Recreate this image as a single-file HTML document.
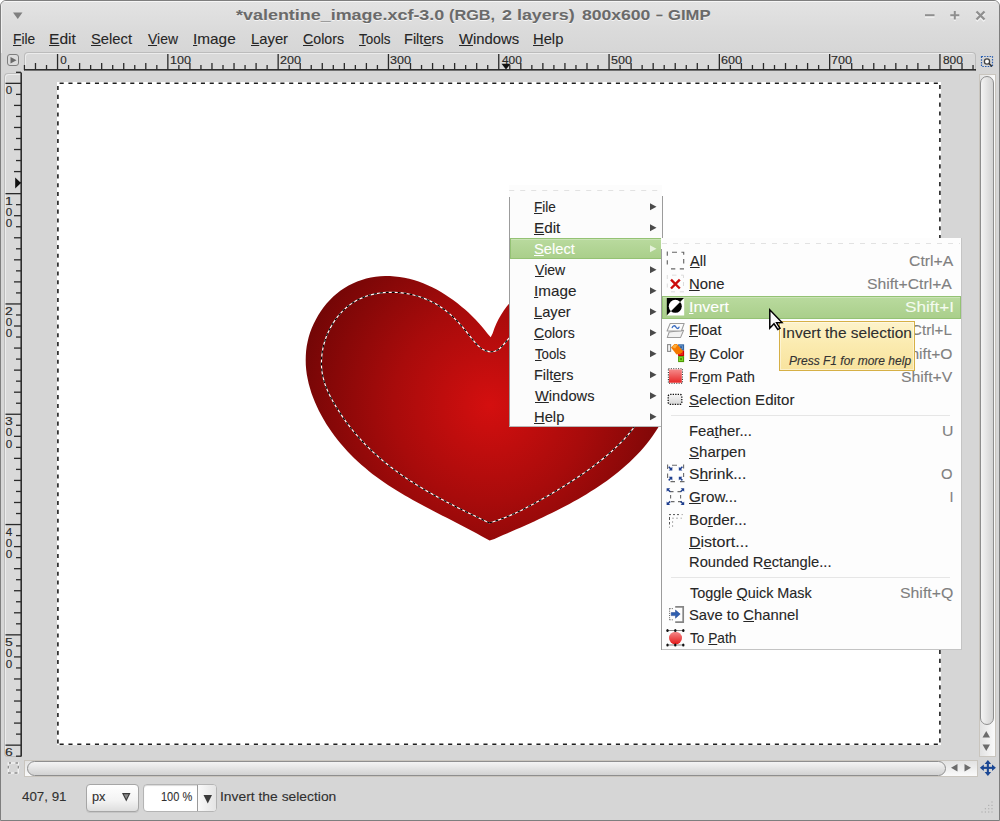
<!DOCTYPE html><html><head><meta charset="utf-8"><style>
*{margin:0;padding:0;box-sizing:border-box}
html,body{width:1000px;height:821px;overflow:hidden;background:#fff;font-family:"Liberation Sans",sans-serif}
.a{position:absolute}
.t{position:absolute;white-space:pre;line-height:1;transform-origin:0 0;-webkit-text-stroke:0.1px currentColor}
u{text-decoration:underline;text-decoration-thickness:1px;text-underline-offset:1.2px}
svg{position:absolute;left:0;top:0;overflow:visible}
</style></head><body>

<div class="a" style="left:0;top:0;width:1000px;height:821px;background:#d6d6d6;border:1px solid #7e7e7e;border-radius:6px 6px 0 0;overflow:hidden">
<div class="a" style="left:0;top:0;width:998px;height:52px;background:linear-gradient(#e3e3e3,#dadada 60%,#d6d6d6);border-top:1px solid #f6f6f6;border-left:1px solid #f0f0f0"></div>
</div>
<div class="t" style="left:236.00px;top:7.00px;font-size:15px;font-weight:bold;color:#6a6a6a;transform:scaleX(1.1954);-webkit-text-stroke:0.05px currentColor;text-shadow:0 1px 0 rgba(255,255,255,.7)">*valentine_image.xcf-3.0</div>
<div class="t" style="left:449.32px;top:7.00px;font-size:15px;font-weight:bold;color:#6a6a6a;transform:scaleX(1.0829);-webkit-text-stroke:0.05px currentColor;text-shadow:0 1px 0 rgba(255,255,255,.7)">(RGB,</div>
<div class="t" style="left:502.00px;top:7.00px;font-size:15px;font-weight:bold;color:#6a6a6a;transform:scaleX(1.1933);-webkit-text-stroke:0.05px currentColor;text-shadow:0 1px 0 rgba(255,255,255,.7)">2 layers)</div>
<div class="t" style="left:581.60px;top:7.00px;font-size:15px;font-weight:bold;color:#6a6a6a;transform:scaleX(1.1707);-webkit-text-stroke:0.05px currentColor;text-shadow:0 1px 0 rgba(255,255,255,.7)">800x600</div>
<div class="t" style="left:655.50px;top:7.00px;font-size:15px;font-weight:bold;color:#6a6a6a;transform:scaleX(0.8125);-webkit-text-stroke:0.05px currentColor;text-shadow:0 1px 0 rgba(255,255,255,.7)">–</div>
<div class="t" style="left:668.39px;top:7.00px;font-size:15px;font-weight:bold;color:#6a6a6a;transform:scaleX(1.1081);-webkit-text-stroke:0.05px currentColor;text-shadow:0 1px 0 rgba(255,255,255,.7)">GIMP</div>
<svg width="1000" height="821"><path d="M13,12.5 L22.5,12.5 L17.75,19 Z" fill="#7f7f7f"/><g transform="translate(0,1.6)" stroke="#f4f4f4" opacity="0.9"><path d="M925,15.2 H934.5" stroke-width="2"/><path d="M950.3,15.2 H959.3 M954.8,11 V19.5" stroke-width="2"/><path d="M976.5,11.5 L984.5,19.5 M984.5,11.5 L976.5,19.5" stroke-width="2.6"/></g><g stroke="#8f8f8f"><path d="M925,15.2 H934.5" stroke-width="2"/><path d="M950.3,15.2 H959.3 M954.8,11 V19.5" stroke-width="2"/><path d="M976.5,11.5 L984.5,19.5 M984.5,11.5 L976.5,19.5" stroke-width="2.3"/></g></svg>
<div class="t" style="left:12.65px;top:31.61px;font-size:14.4px;;color:#262626;transform:scaleX(0.9545);"><u>F</u>ile</div>
<div class="t" style="left:48.92px;top:31.61px;font-size:14.4px;;color:#262626;transform:scaleX(1.0833);"><u>E</u>dit</div>
<div class="t" style="left:90.97px;top:31.61px;font-size:14.4px;;color:#262626;transform:scaleX(1.0256);"><u>S</u>elect</div>
<div class="t" style="left:148.00px;top:31.61px;font-size:14.4px;;color:#262626;transform:scaleX(0.9677);"><u>V</u>iew</div>
<div class="t" style="left:193.33px;top:31.61px;font-size:14.4px;;color:#262626;transform:scaleX(1.0667);"><u>I</u>mage</div>
<div class="t" style="left:250.97px;top:31.61px;font-size:14.4px;;color:#262626;transform:scaleX(1.0286);"><u>L</u>ayer</div>
<div class="t" style="left:302.62px;top:31.61px;font-size:14.4px;;color:#262626;transform:scaleX(0.9850);"><u>C</u>olors</div>
<div class="t" style="left:358.70px;top:31.61px;font-size:14.4px;;color:#262626;transform:scaleX(0.9333);"><u>T</u>ools</div>
<div class="t" style="left:404.19px;top:31.61px;font-size:14.4px;;color:#262626;transform:scaleX(1.0105);">Filt<u>e</u>rs</div>
<div class="t" style="left:459.20px;top:31.61px;font-size:14.4px;;color:#262626;transform:scaleX(1.0310);"><u>W</u>indows</div>
<div class="t" style="left:532.88px;top:31.61px;font-size:14.4px;;color:#262626;transform:scaleX(1.0250);"><u>H</u>elp</div>
<div class="a" style="left:6.8px;top:54px;width:12px;height:12px;border:1.3px solid #7e7e7e;border-radius:3px;background:#dcdcdc"></div>
<svg width="1000" height="821"><path d="M10.5,57 L16.5,60.3 L10.5,63.6 Z" fill="#6a6a6a"/></svg>
<div class="a" style="left:24px;top:52px;width:952px;height:19px;border:1px solid #bcbcbc;border-bottom:none;border-radius:4px 4px 0 0;background:#d9d9d9;box-shadow:inset 1px 1px 0 #ececec"></div>
<svg width="1000" height="821"><rect x="24" y="69" width="952" height="1.6" fill="#2e2e2e"/><rect x="23.81" y="65" width="1.3" height="5" fill="#2a2a2a"/><rect x="34.84" y="63" width="1.3" height="7" fill="#2a2a2a"/><rect x="45.87" y="65" width="1.3" height="5" fill="#2a2a2a"/><rect x="56.90" y="54" width="1.3" height="16" fill="#2a2a2a"/><rect x="67.93" y="65" width="1.3" height="5" fill="#2a2a2a"/><rect x="78.96" y="63" width="1.3" height="7" fill="#2a2a2a"/><rect x="89.99" y="65" width="1.3" height="5" fill="#2a2a2a"/><rect x="101.02" y="63" width="1.3" height="7" fill="#2a2a2a"/><rect x="112.05" y="65" width="1.3" height="5" fill="#2a2a2a"/><rect x="123.08" y="63" width="1.3" height="7" fill="#2a2a2a"/><rect x="134.11" y="65" width="1.3" height="5" fill="#2a2a2a"/><rect x="145.14" y="63" width="1.3" height="7" fill="#2a2a2a"/><rect x="156.17" y="65" width="1.3" height="5" fill="#2a2a2a"/><rect x="167.20" y="54" width="1.3" height="16" fill="#2a2a2a"/><rect x="178.23" y="65" width="1.3" height="5" fill="#2a2a2a"/><rect x="189.26" y="63" width="1.3" height="7" fill="#2a2a2a"/><rect x="200.29" y="65" width="1.3" height="5" fill="#2a2a2a"/><rect x="211.32" y="63" width="1.3" height="7" fill="#2a2a2a"/><rect x="222.35" y="65" width="1.3" height="5" fill="#2a2a2a"/><rect x="233.38" y="63" width="1.3" height="7" fill="#2a2a2a"/><rect x="244.41" y="65" width="1.3" height="5" fill="#2a2a2a"/><rect x="255.44" y="63" width="1.3" height="7" fill="#2a2a2a"/><rect x="266.47" y="65" width="1.3" height="5" fill="#2a2a2a"/><rect x="277.50" y="54" width="1.3" height="16" fill="#2a2a2a"/><rect x="288.53" y="65" width="1.3" height="5" fill="#2a2a2a"/><rect x="299.56" y="63" width="1.3" height="7" fill="#2a2a2a"/><rect x="310.59" y="65" width="1.3" height="5" fill="#2a2a2a"/><rect x="321.62" y="63" width="1.3" height="7" fill="#2a2a2a"/><rect x="332.65" y="65" width="1.3" height="5" fill="#2a2a2a"/><rect x="343.68" y="63" width="1.3" height="7" fill="#2a2a2a"/><rect x="354.71" y="65" width="1.3" height="5" fill="#2a2a2a"/><rect x="365.74" y="63" width="1.3" height="7" fill="#2a2a2a"/><rect x="376.77" y="65" width="1.3" height="5" fill="#2a2a2a"/><rect x="387.80" y="54" width="1.3" height="16" fill="#2a2a2a"/><rect x="398.83" y="65" width="1.3" height="5" fill="#2a2a2a"/><rect x="409.86" y="63" width="1.3" height="7" fill="#2a2a2a"/><rect x="420.89" y="65" width="1.3" height="5" fill="#2a2a2a"/><rect x="431.92" y="63" width="1.3" height="7" fill="#2a2a2a"/><rect x="442.95" y="65" width="1.3" height="5" fill="#2a2a2a"/><rect x="453.98" y="63" width="1.3" height="7" fill="#2a2a2a"/><rect x="465.01" y="65" width="1.3" height="5" fill="#2a2a2a"/><rect x="476.04" y="63" width="1.3" height="7" fill="#2a2a2a"/><rect x="487.07" y="65" width="1.3" height="5" fill="#2a2a2a"/><rect x="498.10" y="54" width="1.3" height="16" fill="#2a2a2a"/><rect x="509.13" y="65" width="1.3" height="5" fill="#2a2a2a"/><rect x="520.16" y="63" width="1.3" height="7" fill="#2a2a2a"/><rect x="531.19" y="65" width="1.3" height="5" fill="#2a2a2a"/><rect x="542.22" y="63" width="1.3" height="7" fill="#2a2a2a"/><rect x="553.25" y="65" width="1.3" height="5" fill="#2a2a2a"/><rect x="564.28" y="63" width="1.3" height="7" fill="#2a2a2a"/><rect x="575.31" y="65" width="1.3" height="5" fill="#2a2a2a"/><rect x="586.34" y="63" width="1.3" height="7" fill="#2a2a2a"/><rect x="597.37" y="65" width="1.3" height="5" fill="#2a2a2a"/><rect x="608.40" y="54" width="1.3" height="16" fill="#2a2a2a"/><rect x="619.43" y="65" width="1.3" height="5" fill="#2a2a2a"/><rect x="630.46" y="63" width="1.3" height="7" fill="#2a2a2a"/><rect x="641.49" y="65" width="1.3" height="5" fill="#2a2a2a"/><rect x="652.52" y="63" width="1.3" height="7" fill="#2a2a2a"/><rect x="663.55" y="65" width="1.3" height="5" fill="#2a2a2a"/><rect x="674.58" y="63" width="1.3" height="7" fill="#2a2a2a"/><rect x="685.61" y="65" width="1.3" height="5" fill="#2a2a2a"/><rect x="696.64" y="63" width="1.3" height="7" fill="#2a2a2a"/><rect x="707.67" y="65" width="1.3" height="5" fill="#2a2a2a"/><rect x="718.70" y="54" width="1.3" height="16" fill="#2a2a2a"/><rect x="729.73" y="65" width="1.3" height="5" fill="#2a2a2a"/><rect x="740.76" y="63" width="1.3" height="7" fill="#2a2a2a"/><rect x="751.79" y="65" width="1.3" height="5" fill="#2a2a2a"/><rect x="762.82" y="63" width="1.3" height="7" fill="#2a2a2a"/><rect x="773.85" y="65" width="1.3" height="5" fill="#2a2a2a"/><rect x="784.88" y="63" width="1.3" height="7" fill="#2a2a2a"/><rect x="795.91" y="65" width="1.3" height="5" fill="#2a2a2a"/><rect x="806.94" y="63" width="1.3" height="7" fill="#2a2a2a"/><rect x="817.97" y="65" width="1.3" height="5" fill="#2a2a2a"/><rect x="829.00" y="54" width="1.3" height="16" fill="#2a2a2a"/><rect x="840.03" y="65" width="1.3" height="5" fill="#2a2a2a"/><rect x="851.06" y="63" width="1.3" height="7" fill="#2a2a2a"/><rect x="862.09" y="65" width="1.3" height="5" fill="#2a2a2a"/><rect x="873.12" y="63" width="1.3" height="7" fill="#2a2a2a"/><rect x="884.15" y="65" width="1.3" height="5" fill="#2a2a2a"/><rect x="895.18" y="63" width="1.3" height="7" fill="#2a2a2a"/><rect x="906.21" y="65" width="1.3" height="5" fill="#2a2a2a"/><rect x="917.24" y="63" width="1.3" height="7" fill="#2a2a2a"/><rect x="928.27" y="65" width="1.3" height="5" fill="#2a2a2a"/><rect x="939.30" y="54" width="1.3" height="16" fill="#2a2a2a"/><rect x="950.33" y="65" width="1.3" height="5" fill="#2a2a2a"/><rect x="961.36" y="63" width="1.3" height="7" fill="#2a2a2a"/><rect x="972.39" y="65" width="1.3" height="5" fill="#2a2a2a"/></svg>
<div class="t" style="left:60.30px;top:54.08px;font-size:11.6px;;color:#2a2a2a;transform:scaleX(1.0000);-webkit-text-stroke:0.15px currentColor">0</div>
<div class="t" style="left:169.52px;top:54.08px;font-size:11.6px;;color:#2a2a2a;transform:scaleX(1.0833);-webkit-text-stroke:0.15px currentColor">100</div>
<div class="t" style="left:279.82px;top:54.08px;font-size:11.6px;;color:#2a2a2a;transform:scaleX(1.0833);-webkit-text-stroke:0.15px currentColor">200</div>
<div class="t" style="left:390.12px;top:54.08px;font-size:11.6px;;color:#2a2a2a;transform:scaleX(1.0833);-webkit-text-stroke:0.15px currentColor">300</div>
<div class="t" style="left:501.50px;top:54.08px;font-size:11.6px;;color:#2a2a2a;transform:scaleX(1.0263);-webkit-text-stroke:0.15px currentColor">400</div>
<div class="t" style="left:610.72px;top:54.08px;font-size:11.6px;;color:#2a2a2a;transform:scaleX(1.0833);-webkit-text-stroke:0.15px currentColor">500</div>
<div class="t" style="left:721.02px;top:54.08px;font-size:11.6px;;color:#2a2a2a;transform:scaleX(1.0833);-webkit-text-stroke:0.15px currentColor">600</div>
<div class="t" style="left:831.32px;top:54.08px;font-size:11.6px;;color:#2a2a2a;transform:scaleX(1.0833);-webkit-text-stroke:0.15px currentColor">700</div>
<div class="t" style="left:942.70px;top:54.08px;font-size:11.6px;;color:#2a2a2a;transform:scaleX(1.0263);-webkit-text-stroke:0.15px currentColor">800</div>
<svg width="1000" height="821"><path d="M501.5,63.8 L510.5,63.8 L506,69.5 Z" fill="#111"/></svg>
<svg width="1000" height="821"><rect x="981.5" y="56.5" width="11" height="10" fill="none" stroke="#2a5fb0" stroke-width="1.2" stroke-dasharray="1.5,1.2"/><circle cx="987" cy="61.5" r="2.6" fill="#fff" stroke="#444" stroke-width="1.3"/><path d="M989,63.5 L992,66.5" stroke="#333" stroke-width="1.6"/></svg>
<div class="a" style="left:3.5px;top:72.5px;width:18px;height:684.5px;border:1px solid #bcbcbc;border-right:none;border-radius:4px 0 0 4px;background:#d9d9d9;box-shadow:inset 1px 1px 0 #ececec"></div>
<svg width="1000" height="821"><rect x="20.4" y="72.5" width="1.6" height="684" fill="#2e2e2e"/><rect x="16" y="71.67" width="5" height="1.3" fill="#2a2a2a"/><rect x="5.5" y="82.70" width="15.5" height="1.3" fill="#2a2a2a"/><rect x="16" y="93.73" width="5" height="1.3" fill="#2a2a2a"/><rect x="14" y="104.76" width="7" height="1.3" fill="#2a2a2a"/><rect x="16" y="115.79" width="5" height="1.3" fill="#2a2a2a"/><rect x="14" y="126.82" width="7" height="1.3" fill="#2a2a2a"/><rect x="16" y="137.85" width="5" height="1.3" fill="#2a2a2a"/><rect x="14" y="148.88" width="7" height="1.3" fill="#2a2a2a"/><rect x="16" y="159.91" width="5" height="1.3" fill="#2a2a2a"/><rect x="14" y="170.94" width="7" height="1.3" fill="#2a2a2a"/><rect x="16" y="181.97" width="5" height="1.3" fill="#2a2a2a"/><rect x="5.5" y="193.00" width="15.5" height="1.3" fill="#2a2a2a"/><rect x="16" y="204.03" width="5" height="1.3" fill="#2a2a2a"/><rect x="14" y="215.06" width="7" height="1.3" fill="#2a2a2a"/><rect x="16" y="226.09" width="5" height="1.3" fill="#2a2a2a"/><rect x="14" y="237.12" width="7" height="1.3" fill="#2a2a2a"/><rect x="16" y="248.15" width="5" height="1.3" fill="#2a2a2a"/><rect x="14" y="259.18" width="7" height="1.3" fill="#2a2a2a"/><rect x="16" y="270.21" width="5" height="1.3" fill="#2a2a2a"/><rect x="14" y="281.24" width="7" height="1.3" fill="#2a2a2a"/><rect x="16" y="292.27" width="5" height="1.3" fill="#2a2a2a"/><rect x="5.5" y="303.30" width="15.5" height="1.3" fill="#2a2a2a"/><rect x="16" y="314.33" width="5" height="1.3" fill="#2a2a2a"/><rect x="14" y="325.36" width="7" height="1.3" fill="#2a2a2a"/><rect x="16" y="336.39" width="5" height="1.3" fill="#2a2a2a"/><rect x="14" y="347.42" width="7" height="1.3" fill="#2a2a2a"/><rect x="16" y="358.45" width="5" height="1.3" fill="#2a2a2a"/><rect x="14" y="369.48" width="7" height="1.3" fill="#2a2a2a"/><rect x="16" y="380.51" width="5" height="1.3" fill="#2a2a2a"/><rect x="14" y="391.54" width="7" height="1.3" fill="#2a2a2a"/><rect x="16" y="402.57" width="5" height="1.3" fill="#2a2a2a"/><rect x="5.5" y="413.60" width="15.5" height="1.3" fill="#2a2a2a"/><rect x="16" y="424.63" width="5" height="1.3" fill="#2a2a2a"/><rect x="14" y="435.66" width="7" height="1.3" fill="#2a2a2a"/><rect x="16" y="446.69" width="5" height="1.3" fill="#2a2a2a"/><rect x="14" y="457.72" width="7" height="1.3" fill="#2a2a2a"/><rect x="16" y="468.75" width="5" height="1.3" fill="#2a2a2a"/><rect x="14" y="479.78" width="7" height="1.3" fill="#2a2a2a"/><rect x="16" y="490.81" width="5" height="1.3" fill="#2a2a2a"/><rect x="14" y="501.84" width="7" height="1.3" fill="#2a2a2a"/><rect x="16" y="512.87" width="5" height="1.3" fill="#2a2a2a"/><rect x="5.5" y="523.90" width="15.5" height="1.3" fill="#2a2a2a"/><rect x="16" y="534.93" width="5" height="1.3" fill="#2a2a2a"/><rect x="14" y="545.96" width="7" height="1.3" fill="#2a2a2a"/><rect x="16" y="556.99" width="5" height="1.3" fill="#2a2a2a"/><rect x="14" y="568.02" width="7" height="1.3" fill="#2a2a2a"/><rect x="16" y="579.05" width="5" height="1.3" fill="#2a2a2a"/><rect x="14" y="590.08" width="7" height="1.3" fill="#2a2a2a"/><rect x="16" y="601.11" width="5" height="1.3" fill="#2a2a2a"/><rect x="14" y="612.14" width="7" height="1.3" fill="#2a2a2a"/><rect x="16" y="623.17" width="5" height="1.3" fill="#2a2a2a"/><rect x="5.5" y="634.20" width="15.5" height="1.3" fill="#2a2a2a"/><rect x="16" y="645.23" width="5" height="1.3" fill="#2a2a2a"/><rect x="14" y="656.26" width="7" height="1.3" fill="#2a2a2a"/><rect x="16" y="667.29" width="5" height="1.3" fill="#2a2a2a"/><rect x="14" y="678.32" width="7" height="1.3" fill="#2a2a2a"/><rect x="16" y="689.35" width="5" height="1.3" fill="#2a2a2a"/><rect x="14" y="700.38" width="7" height="1.3" fill="#2a2a2a"/><rect x="16" y="711.41" width="5" height="1.3" fill="#2a2a2a"/><rect x="14" y="722.44" width="7" height="1.3" fill="#2a2a2a"/><rect x="16" y="733.47" width="5" height="1.3" fill="#2a2a2a"/><rect x="5.5" y="744.50" width="15.5" height="1.3" fill="#2a2a2a"/><rect x="16" y="755.53" width="5" height="1.3" fill="#2a2a2a"/></svg>
<div class="t" style="left:5.80px;top:84.38px;font-size:11.6px;;color:#2a2a2a;transform:scaleX(1.0000);-webkit-text-stroke:0.15px currentColor">0</div>
<div class="t" style="left:4.60px;top:194.68px;font-size:11.6px;;color:#2a2a2a;transform:scaleX(1.2000);-webkit-text-stroke:0.15px currentColor">1</div>
<div class="t" style="left:5.80px;top:205.88px;font-size:11.6px;;color:#2a2a2a;transform:scaleX(1.0000);-webkit-text-stroke:0.15px currentColor">0</div>
<div class="t" style="left:5.80px;top:217.08px;font-size:11.6px;;color:#2a2a2a;transform:scaleX(1.0000);-webkit-text-stroke:0.15px currentColor">0</div>
<div class="t" style="left:4.60px;top:304.98px;font-size:11.6px;;color:#2a2a2a;transform:scaleX(1.2000);-webkit-text-stroke:0.15px currentColor">2</div>
<div class="t" style="left:5.80px;top:316.18px;font-size:11.6px;;color:#2a2a2a;transform:scaleX(1.0000);-webkit-text-stroke:0.15px currentColor">0</div>
<div class="t" style="left:5.80px;top:327.38px;font-size:11.6px;;color:#2a2a2a;transform:scaleX(1.0000);-webkit-text-stroke:0.15px currentColor">0</div>
<div class="t" style="left:4.60px;top:415.28px;font-size:11.6px;;color:#2a2a2a;transform:scaleX(1.2000);-webkit-text-stroke:0.15px currentColor">3</div>
<div class="t" style="left:5.80px;top:426.48px;font-size:11.6px;;color:#2a2a2a;transform:scaleX(1.0000);-webkit-text-stroke:0.15px currentColor">0</div>
<div class="t" style="left:5.80px;top:437.68px;font-size:11.6px;;color:#2a2a2a;transform:scaleX(1.0000);-webkit-text-stroke:0.15px currentColor">0</div>
<div class="t" style="left:5.80px;top:525.58px;font-size:11.6px;;color:#2a2a2a;transform:scaleX(1.0000);-webkit-text-stroke:0.15px currentColor">4</div>
<div class="t" style="left:5.80px;top:536.78px;font-size:11.6px;;color:#2a2a2a;transform:scaleX(1.0000);-webkit-text-stroke:0.15px currentColor">0</div>
<div class="t" style="left:5.80px;top:547.98px;font-size:11.6px;;color:#2a2a2a;transform:scaleX(1.0000);-webkit-text-stroke:0.15px currentColor">0</div>
<div class="t" style="left:4.60px;top:635.88px;font-size:11.6px;;color:#2a2a2a;transform:scaleX(1.2000);-webkit-text-stroke:0.15px currentColor">5</div>
<div class="t" style="left:5.80px;top:647.08px;font-size:11.6px;;color:#2a2a2a;transform:scaleX(1.0000);-webkit-text-stroke:0.15px currentColor">0</div>
<div class="t" style="left:5.80px;top:658.28px;font-size:11.6px;;color:#2a2a2a;transform:scaleX(1.0000);-webkit-text-stroke:0.15px currentColor">0</div>
<div class="t" style="left:4.60px;top:746.18px;font-size:11.6px;;color:#2a2a2a;transform:scaleX(1.2000);-webkit-text-stroke:0.15px currentColor">6</div>
<svg width="1000" height="821"><path d="M15.2,177.6 L15.2,188.4 L21,183 Z" fill="#111"/></svg>
<div class="a" style="left:57px;top:82px;width:884px;height:663px;background:#fff"></div>
<svg width="1000" height="821"><rect x="57.9" y="83.3" width="882" height="661" fill="none" stroke="#fff" stroke-width="1.6"/><path d="M57.1,83.3 L940.7,83.3" stroke="#1e1e1e" stroke-width="1.6" stroke-dasharray="4.1,4.73" stroke-dashoffset="6.33"/><path d="M57.9,84 L57.9,744" stroke="#1e1e1e" stroke-width="1.6" stroke-dasharray="4.1,4.73" stroke-dashoffset="6.83"/><path d="M939.9,84 L939.9,744" stroke="#1e1e1e" stroke-width="1.6" stroke-dasharray="4.1,4.73" stroke-dashoffset="7.93"/><path d="M57.1,744.3 L940.7,744.3" stroke="#1e1e1e" stroke-width="1.6" stroke-dasharray="4.1,4.73" stroke-dashoffset="6.33"/></svg>
<svg width="1000" height="821"><defs><radialGradient id="hg" gradientUnits="userSpaceOnUse" cx="490" cy="405" r="215"><stop offset="0" stop-color="#d40f0f"/><stop offset="0.45" stop-color="#a80b0b"/><stop offset="1" stop-color="#680505"/></radialGradient></defs><path d="M489.6,540.6 L485.4,538.3 L481.2,535.9 L476.9,533.5 L472.6,531.2 L468.3,528.9 L464.0,526.7 L459.7,524.5 L455.4,522.2 L451.1,520.0 L446.8,517.8 L442.5,515.7 L438.2,513.5 L433.9,511.3 L429.7,509.0 L425.4,506.8 L421.2,504.6 L417.0,502.3 L412.8,500.0 L408.6,497.6 L404.5,495.2 L400.4,492.8 L396.3,490.3 L392.3,487.8 L388.3,485.2 L384.3,482.5 L380.4,479.8 L376.6,477.0 L372.7,474.2 L369.0,471.2 L365.3,468.1 L361.6,465.0 L358.0,461.8 L354.5,458.4 L351.0,455.0 L347.6,451.5 L344.3,447.8 L341.0,444.0 L337.9,440.2 L334.8,436.2 L331.9,432.2 L329.0,428.1 L326.3,423.9 L323.7,419.6 L321.3,415.3 L319.0,410.9 L316.9,406.5 L314.9,402.0 L313.1,397.5 L311.4,392.9 L310.0,388.3 L308.7,383.7 L307.7,379.0 L306.8,374.4 L306.2,369.7 L305.8,365.0 L305.7,360.3 L305.8,355.7 L306.1,351.0 L306.7,346.3 L307.6,341.7 L308.7,337.1 L310.1,332.6 L311.8,328.1 L313.7,323.7 L315.9,319.4 L318.2,315.2 L320.8,311.2 L323.6,307.2 L326.6,303.5 L329.9,299.9 L333.3,296.6 L336.9,293.4 L340.6,290.5 L344.5,287.9 L348.6,285.5 L352.8,283.4 L357.2,281.5 L361.7,279.9 L366.2,278.6 L370.9,277.6 L375.6,276.8 L380.4,276.3 L385.2,276.1 L390.0,276.1 L394.8,276.4 L399.6,276.9 L404.4,277.7 L409.2,278.8 L413.9,280.1 L418.6,281.6 L423.2,283.3 L427.7,285.2 L432.2,287.3 L436.7,289.6 L441.0,292.1 L445.3,294.7 L449.4,297.4 L453.5,300.3 L457.5,303.3 L461.3,306.4 L465.1,309.6 L468.7,312.8 L472.2,316.2 L475.5,319.6 L478.7,323.1 L481.8,326.5 L484.7,330.0 L487.4,333.6 L490.7,337.3 L492.7,333.3 L494.4,328.3 L496.4,323.6 L498.6,319.0 L501.1,314.7 L503.8,310.5 L506.7,306.6 L509.9,302.8 L513.3,299.3 L516.8,296.0 L520.6,292.9 L524.4,290.0 L528.5,287.4 L532.7,285.0 L537.0,282.8 L541.4,280.9 L546.0,279.3 L550.6,277.9 L555.4,276.7 L560.1,275.8 L565.0,275.1 L569.9,274.7 L574.8,274.5 L579.7,274.6 L584.6,274.9 L589.6,275.4 L594.4,276.2 L599.3,277.1 L604.1,278.4 L608.8,279.8 L613.5,281.5 L618.1,283.3 L622.5,285.4 L626.9,287.7 L631.1,290.3 L635.2,293.0 L639.1,296.0 L642.9,299.1 L646.4,302.5 L649.8,306.0 L653.0,309.7 L656.0,313.6 L658.9,317.6 L661.5,321.7 L663.8,326.0 L666.0,330.3 L667.9,334.8 L669.7,339.4 L671.1,344.0 L672.4,348.7 L673.3,353.4 L674.1,358.2 L674.5,363.0 L674.8,367.8 L674.7,372.6 L674.5,377.4 L674.0,382.2 L673.3,387.0 L672.4,391.7 L671.2,396.5 L669.9,401.2 L668.4,405.8 L666.6,410.4 L664.7,414.9 L662.6,419.3 L660.4,423.7 L657.9,427.9 L655.3,432.1 L652.6,436.1 L649.7,440.1 L646.6,444.0 L643.5,447.8 L640.2,451.4 L636.8,455.0 L633.3,458.5 L629.8,462.0 L626.1,465.3 L622.4,468.5 L618.6,471.7 L614.8,474.8 L610.9,477.8 L607.0,480.7 L602.9,483.5 L598.9,486.3 L594.8,489.0 L590.6,491.6 L586.5,494.2 L582.2,496.7 L578.0,499.2 L573.7,501.6 L569.4,504.0 L565.0,506.3 L560.6,508.6 L556.3,510.8 L551.8,513.0 L547.4,515.1 L543.0,517.2 L538.6,519.3 L534.1,521.4 L529.7,523.4 L525.2,525.4 L520.8,527.4 L516.4,529.3 L511.9,531.3 L507.5,533.2 L503.1,535.1 L498.7,537.1 L494.4,539.0 L489.6,540.6 Z" fill="url(#hg)"/><path d="M489.6,522.9 L486.3,521.4 L483.1,519.9 L479.9,518.4 L476.6,516.8 L473.4,515.3 L470.2,513.7 L466.9,512.2 L463.7,510.6 L460.5,509.0 L457.2,507.4 L454.0,505.8 L450.8,504.1 L447.6,502.4 L444.4,500.8 L441.2,499.1 L438.0,497.3 L434.8,495.6 L431.7,493.8 L428.5,492.0 L425.4,490.2 L422.3,488.3 L419.2,486.5 L416.1,484.6 L413.1,482.6 L410.0,480.7 L407.0,478.7 L404.0,476.7 L401.1,474.6 L398.2,472.5 L395.2,470.4 L392.4,468.2 L389.5,466.1 L386.7,463.8 L383.9,461.6 L381.2,459.3 L378.5,456.9 L375.8,454.5 L373.1,452.1 L370.5,449.7 L368.0,447.2 L365.4,444.6 L363.0,442.0 L360.5,439.4 L358.1,436.7 L355.8,434.0 L353.5,431.3 L351.2,428.5 L349.0,425.6 L346.8,422.8 L344.7,419.8 L342.6,416.9 L340.6,413.9 L338.6,410.8 L336.7,407.8 L334.8,404.6 L333.0,401.5 L331.2,398.3 L329.6,395.0 L328.0,391.8 L326.6,388.4 L325.3,385.1 L324.2,381.7 L323.3,378.2 L322.5,374.7 L321.9,371.2 L321.6,367.6 L321.4,364.0 L321.5,360.4 L321.7,356.8 L322.1,353.2 L322.7,349.6 L323.4,346.0 L324.4,342.5 L325.5,339.0 L326.7,335.5 L328.2,332.2 L329.8,328.9 L331.5,325.7 L333.4,322.6 L335.4,319.6 L337.6,316.7 L339.9,314.0 L342.3,311.3 L344.9,308.9 L347.6,306.5 L350.4,304.4 L353.3,302.4 L356.3,300.6 L359.5,299.0 L362.7,297.6 L366.0,296.3 L369.4,295.3 L372.8,294.4 L376.4,293.6 L379.9,293.0 L383.5,292.6 L387.1,292.4 L390.8,292.3 L394.4,292.3 L398.1,292.5 L401.8,292.9 L405.4,293.4 L409.0,294.0 L412.6,294.8 L416.2,295.8 L419.7,296.8 L423.1,298.0 L426.5,299.4 L429.8,300.8 L433.0,302.4 L436.1,304.1 L439.1,305.9 L442.1,307.9 L444.9,310.0 L447.6,312.1 L450.3,314.4 L452.9,316.8 L455.5,319.3 L458.0,321.9 L460.4,324.6 L462.9,327.4 L465.3,330.3 L467.7,333.3 L470.1,336.3 L472.5,339.4 L475.0,342.4 L477.5,345.2 L480.2,347.6 L483.1,349.6 L486.0,350.9 L489.0,351.6 L492.0,351.7 L494.9,351.2 L497.7,349.9 L500.2,348.0 L502.6,345.6 L504.9,343.0 L507.3,340.2 L509.7,337.4 L512.2,334.7 L514.7,331.9 L517.3,329.2 L519.9,326.5 L522.6,323.9 L525.3,321.3 L528.1,318.7 L530.9,316.3 L533.8,313.9 L536.7,311.7 L539.7,309.5 L542.7,307.4 L545.8,305.5 L548.9,303.7 L552.0,302.1 L555.2,300.6 L558.5,299.2 L561.8,298.1 L565.1,297.1 L568.4,296.3 L571.8,295.7 L575.3,295.4 L578.7,295.2 L582.2,295.3 L585.8,295.6 L589.3,296.1 L592.8,296.7 L596.3,297.6 L599.7,298.7 L603.2,299.9 L606.5,301.3 L609.8,302.9 L613.1,304.7 L616.2,306.6 L619.3,308.7 L622.2,310.9 L625.0,313.3 L627.7,315.8 L630.3,318.4 L632.7,321.2 L634.9,324.1 L637.0,327.1 L639.0,330.2 L640.8,333.4 L642.4,336.7 L643.9,340.0 L645.3,343.5 L646.5,347.0 L647.6,350.5 L648.5,354.1 L649.3,357.8 L649.9,361.4 L650.4,365.1 L650.7,368.8 L650.9,372.5 L650.9,376.2 L650.8,379.9 L650.6,383.6 L650.2,387.2 L649.7,390.8 L649.0,394.4 L648.2,397.9 L647.2,401.3 L646.1,404.7 L644.8,408.0 L643.4,411.2 L641.9,414.4 L640.3,417.4 L638.5,420.4 L636.7,423.4 L634.7,426.3 L632.6,429.1 L630.4,431.9 L628.2,434.6 L625.9,437.2 L623.5,439.8 L621.0,442.4 L618.5,444.9 L615.9,447.4 L613.2,449.9 L610.6,452.3 L607.9,454.6 L605.1,457.0 L602.3,459.3 L599.5,461.5 L596.6,463.8 L593.7,466.0 L590.8,468.1 L587.8,470.3 L584.9,472.4 L581.8,474.5 L578.8,476.5 L575.8,478.5 L572.7,480.5 L569.7,482.5 L566.6,484.5 L563.5,486.4 L560.4,488.3 L557.3,490.2 L554.2,492.0 L551.1,493.9 L548.0,495.7 L544.9,497.5 L541.8,499.2 L538.7,501.0 L535.6,502.7 L532.5,504.5 L529.4,506.1 L526.2,507.8 L523.1,509.4 L519.9,511.0 L516.7,512.5 L513.5,514.0 L510.2,515.4 L506.9,516.8 L503.6,518.1 L500.2,519.4 L496.7,520.6 L493.2,521.8 L489.6,522.9 Z" fill="none" stroke="#fff" stroke-width="1.15"/><path d="M489.6,522.9 L486.3,521.4 L483.1,519.9 L479.9,518.4 L476.6,516.8 L473.4,515.3 L470.2,513.7 L466.9,512.2 L463.7,510.6 L460.5,509.0 L457.2,507.4 L454.0,505.8 L450.8,504.1 L447.6,502.4 L444.4,500.8 L441.2,499.1 L438.0,497.3 L434.8,495.6 L431.7,493.8 L428.5,492.0 L425.4,490.2 L422.3,488.3 L419.2,486.5 L416.1,484.6 L413.1,482.6 L410.0,480.7 L407.0,478.7 L404.0,476.7 L401.1,474.6 L398.2,472.5 L395.2,470.4 L392.4,468.2 L389.5,466.1 L386.7,463.8 L383.9,461.6 L381.2,459.3 L378.5,456.9 L375.8,454.5 L373.1,452.1 L370.5,449.7 L368.0,447.2 L365.4,444.6 L363.0,442.0 L360.5,439.4 L358.1,436.7 L355.8,434.0 L353.5,431.3 L351.2,428.5 L349.0,425.6 L346.8,422.8 L344.7,419.8 L342.6,416.9 L340.6,413.9 L338.6,410.8 L336.7,407.8 L334.8,404.6 L333.0,401.5 L331.2,398.3 L329.6,395.0 L328.0,391.8 L326.6,388.4 L325.3,385.1 L324.2,381.7 L323.3,378.2 L322.5,374.7 L321.9,371.2 L321.6,367.6 L321.4,364.0 L321.5,360.4 L321.7,356.8 L322.1,353.2 L322.7,349.6 L323.4,346.0 L324.4,342.5 L325.5,339.0 L326.7,335.5 L328.2,332.2 L329.8,328.9 L331.5,325.7 L333.4,322.6 L335.4,319.6 L337.6,316.7 L339.9,314.0 L342.3,311.3 L344.9,308.9 L347.6,306.5 L350.4,304.4 L353.3,302.4 L356.3,300.6 L359.5,299.0 L362.7,297.6 L366.0,296.3 L369.4,295.3 L372.8,294.4 L376.4,293.6 L379.9,293.0 L383.5,292.6 L387.1,292.4 L390.8,292.3 L394.4,292.3 L398.1,292.5 L401.8,292.9 L405.4,293.4 L409.0,294.0 L412.6,294.8 L416.2,295.8 L419.7,296.8 L423.1,298.0 L426.5,299.4 L429.8,300.8 L433.0,302.4 L436.1,304.1 L439.1,305.9 L442.1,307.9 L444.9,310.0 L447.6,312.1 L450.3,314.4 L452.9,316.8 L455.5,319.3 L458.0,321.9 L460.4,324.6 L462.9,327.4 L465.3,330.3 L467.7,333.3 L470.1,336.3 L472.5,339.4 L475.0,342.4 L477.5,345.2 L480.2,347.6 L483.1,349.6 L486.0,350.9 L489.0,351.6 L492.0,351.7 L494.9,351.2 L497.7,349.9 L500.2,348.0 L502.6,345.6 L504.9,343.0 L507.3,340.2 L509.7,337.4 L512.2,334.7 L514.7,331.9 L517.3,329.2 L519.9,326.5 L522.6,323.9 L525.3,321.3 L528.1,318.7 L530.9,316.3 L533.8,313.9 L536.7,311.7 L539.7,309.5 L542.7,307.4 L545.8,305.5 L548.9,303.7 L552.0,302.1 L555.2,300.6 L558.5,299.2 L561.8,298.1 L565.1,297.1 L568.4,296.3 L571.8,295.7 L575.3,295.4 L578.7,295.2 L582.2,295.3 L585.8,295.6 L589.3,296.1 L592.8,296.7 L596.3,297.6 L599.7,298.7 L603.2,299.9 L606.5,301.3 L609.8,302.9 L613.1,304.7 L616.2,306.6 L619.3,308.7 L622.2,310.9 L625.0,313.3 L627.7,315.8 L630.3,318.4 L632.7,321.2 L634.9,324.1 L637.0,327.1 L639.0,330.2 L640.8,333.4 L642.4,336.7 L643.9,340.0 L645.3,343.5 L646.5,347.0 L647.6,350.5 L648.5,354.1 L649.3,357.8 L649.9,361.4 L650.4,365.1 L650.7,368.8 L650.9,372.5 L650.9,376.2 L650.8,379.9 L650.6,383.6 L650.2,387.2 L649.7,390.8 L649.0,394.4 L648.2,397.9 L647.2,401.3 L646.1,404.7 L644.8,408.0 L643.4,411.2 L641.9,414.4 L640.3,417.4 L638.5,420.4 L636.7,423.4 L634.7,426.3 L632.6,429.1 L630.4,431.9 L628.2,434.6 L625.9,437.2 L623.5,439.8 L621.0,442.4 L618.5,444.9 L615.9,447.4 L613.2,449.9 L610.6,452.3 L607.9,454.6 L605.1,457.0 L602.3,459.3 L599.5,461.5 L596.6,463.8 L593.7,466.0 L590.8,468.1 L587.8,470.3 L584.9,472.4 L581.8,474.5 L578.8,476.5 L575.8,478.5 L572.7,480.5 L569.7,482.5 L566.6,484.5 L563.5,486.4 L560.4,488.3 L557.3,490.2 L554.2,492.0 L551.1,493.9 L548.0,495.7 L544.9,497.5 L541.8,499.2 L538.7,501.0 L535.6,502.7 L532.5,504.5 L529.4,506.1 L526.2,507.8 L523.1,509.4 L519.9,511.0 L516.7,512.5 L513.5,514.0 L510.2,515.4 L506.9,516.8 L503.6,518.1 L500.2,519.4 L496.7,520.6 L493.2,521.8 L489.6,522.9 Z" fill="none" stroke="#000" stroke-width="1.15" stroke-dasharray="3,3"/></svg>
<div class="a" style="left:978.5px;top:73.5px;width:17px;height:683px;border:1px solid #c9c5be;background:linear-gradient(90deg,#e2e2e2,#fafafa)"></div>
<div class="a" style="left:979.5px;top:76px;width:14px;height:649px;border:1.2px solid #8e8e8e;border-radius:7px;background:linear-gradient(90deg,#f4f4f4,#d2d2d2)"></div>
<svg width="1000" height="821"><path d="M982.5,737.5 L990,737.5 L986.25,731 Z" fill="#6c6c6c"/><path d="M982.5,744.5 L990,744.5 L986.25,751 Z" fill="#6c6c6c"/></svg>
<div class="a" style="left:23.5px;top:759.5px;width:954px;height:17px;border:1px solid #c9c5be;background:linear-gradient(#e2e2e2,#fafafa)"></div>
<div class="a" style="left:27px;top:760.5px;width:919px;height:15px;border:1.2px solid #8e8e8e;border-radius:7.5px;background:linear-gradient(#f4f4f4,#d2d2d2)"></div>
<svg width="1000" height="821"><path d="M957.5,764 L957.5,771.5 L951,767.75 Z" fill="#6c6c6c"/><path d="M964.5,764 L964.5,771.5 L971,767.75 Z" fill="#6c6c6c"/></svg>
<svg width="1000" height="821"><g fill="#1b4794" stroke="none"><rect x="983" y="766.8" width="10" height="2.1"/><rect x="986.8" y="763" width="2.1" height="10"/><path d="M987.85,760.1 L991.1,764 L984.6,764 Z"/><path d="M987.85,775.9 L991.1,772 L984.6,772 Z"/><path d="M979.9,767.85 L983.8,764.6 L983.8,771.1 Z"/><path d="M995.9,767.85 L992,764.6 L992,771.1 Z"/></g></svg>
<svg width="1000" height="821"><rect x="8.3" y="763" width="10" height="10" fill="none" stroke="#f2f2f2" stroke-width="1.4"/><g transform="translate(0.5,0.6)" stroke="#f6f6f6" stroke-width="1.3"><path d="M9,763 H11 M15.5,763 H18 M8.3,765.8 V768.5 M18.3,765.8 V768.5 M8,773 H10.8 M14.5,773 H17.5"/></g><g stroke="#8a8a8a" stroke-width="1.3"><path d="M9,763 H11 M15.5,763 H18 M8.3,765.8 V768.5 M18.3,765.8 V768.5 M8,773 H10.8 M14.5,773 H17.5"/></g></svg>
<div class="t" style="left:22.20px;top:791.16px;font-size:12.8px;;color:#303030;transform:scaleX(1.0429);">407, 91</div>
<div class="a" style="left:85.5px;top:784px;width:53px;height:27.5px;border:1px solid #a6a6a6;border-radius:4px;background:linear-gradient(#ffffff,#f3f3f3 60%,#dedede);box-shadow:0 1px 0 rgba(0,0,0,.08)"></div>
<div class="t" style="left:92.00px;top:791.26px;font-size:12.8px;;color:#303030;transform:scaleX(1.0000);">px</div>
<svg width="1000" height="821"><path d="M122,793 L130.5,793 L126.25,801.5 Z" fill="#3a3a3a"/><path d="M123.8,794.2 L128.7,794.2 L126.25,799 Z" fill="#8a8a8a"/></svg>
<div class="a" style="left:143px;top:784px;width:74px;height:27.5px;border:1px solid #b4b4b4;border-radius:4px;background:#fff;box-shadow:inset 0 1px 1px rgba(0,0,0,.15)"></div>
<div class="a" style="left:197px;top:785px;width:19px;height:25.5px;border-left:1px solid #9a9a9a;background:linear-gradient(90deg,#fafafa,#e4e4e4);border-radius:0 3px 3px 0"></div>
<div class="t" style="left:161.04px;top:791.36px;font-size:12.8px;;color:#303030;transform:scaleX(0.8600);">100 %</div>
<svg width="1000" height="821"><path d="M203.5,795 L212,795 L207.75,803.5 Z" fill="#3a3a3a"/></svg>
<div class="t" style="left:219.82px;top:791.36px;font-size:12.8px;;color:#303030;transform:scaleX(1.0830);">Invert the selection</div>
<svg width="1000" height="821"><g fill="#b0b0b0"><rect x="991.4" y="801.4" width="1.2" height="1.2"/><rect x="988.1" y="804.8" width="1.2" height="1.2"/><rect x="991.4" y="804.8" width="1.2" height="1.2"/><rect x="984.8" y="808.1" width="1.2" height="1.2"/><rect x="988.1" y="808.1" width="1.2" height="1.2"/><rect x="991.4" y="808.1" width="1.2" height="1.2"/><rect x="981.4" y="811.4" width="1.2" height="1.2"/><rect x="984.8" y="811.4" width="1.2" height="1.2"/><rect x="988.1" y="811.4" width="1.2" height="1.2"/><rect x="991.4" y="811.4" width="1.2" height="1.2"/></g></svg>
<div class="a" style="left:508.6px;top:185px;width:153.89999999999998px;height:242px;background:#fcfcfc;box-shadow:0 0 0 0 transparent"></div>
<div class="a" style="left:509px;top:196.5px;width:1.1999999999999886px;height:230.5px;background:#9c9c9c"></div>
<div class="a" style="left:661.8px;top:196px;width:1.2000000000000455px;height:42.5px;background:#9c9c9c"></div>
<div class="a" style="left:509px;top:426px;width:153.5px;height:1.3000000000000114px;background:#b8b8b8"></div>
<svg width="1000" height="821"><path d="M509.2,190.5 H662" stroke="#e2e2e2" stroke-width="1.1" stroke-dasharray="5,6"/></svg>
<div class="a" style="left:509.5px;top:238.2px;width:152.0px;height:20.400000000000034px;background:linear-gradient(#b9da9e,#aacf8b);border:1px solid #94c274;box-shadow:inset 0 1px 0 rgba(255,255,255,.25)"></div>
<div class="t" style="left:533.65px;top:199.91px;font-size:14.4px;;color:#262626;transform:scaleX(0.9455);"><u>F</u>ile</div>
<div class="t" style="left:533.54px;top:220.91px;font-size:14.4px;;color:#262626;transform:scaleX(1.0625);"><u>E</u>dit</div>
<div class="t" style="left:533.58px;top:241.91px;font-size:14.4px;;color:#ffffff;transform:scaleX(1.0205);-webkit-text-stroke:0.1px #fff"><u>S</u>elect</div>
<div class="t" style="left:534.60px;top:262.91px;font-size:14.4px;;color:#262626;transform:scaleX(0.9774);"><u>V</u>iew</div>
<div class="t" style="left:533.54px;top:283.91px;font-size:14.4px;;color:#262626;transform:scaleX(1.0590);"><u>I</u>mage</div>
<div class="t" style="left:533.58px;top:304.91px;font-size:14.4px;;color:#262626;transform:scaleX(1.0200);"><u>L</u>ayer</div>
<div class="t" style="left:533.62px;top:325.91px;font-size:14.4px;;color:#262626;transform:scaleX(0.9775);"><u>C</u>olors</div>
<div class="t" style="left:534.60px;top:346.91px;font-size:14.4px;;color:#262626;transform:scaleX(0.9182);"><u>T</u>ools</div>
<div class="t" style="left:533.59px;top:367.91px;font-size:14.4px;;color:#262626;transform:scaleX(1.0053);">Filt<u>e</u>rs</div>
<div class="t" style="left:534.60px;top:388.91px;font-size:14.4px;;color:#262626;transform:scaleX(1.0190);"><u>W</u>indows</div>
<div class="t" style="left:533.58px;top:409.91px;font-size:14.4px;;color:#262626;transform:scaleX(1.0250);"><u>H</u>elp</div>
<svg width="1000" height="821"><path d="M650,203.2 L656.5,206.7 L650,210.2 Z" fill="#4a4a4a"/><path d="M650,224.2 L656.5,227.7 L650,231.2 Z" fill="#4a4a4a"/><path d="M650,245.2 L656.5,248.7 L650,252.2 Z" fill="#e6f2dc"/><path d="M650,266.2 L656.5,269.7 L650,273.2 Z" fill="#4a4a4a"/><path d="M650,287.2 L656.5,290.7 L650,294.2 Z" fill="#4a4a4a"/><path d="M650,308.2 L656.5,311.7 L650,315.2 Z" fill="#4a4a4a"/><path d="M650,329.2 L656.5,332.7 L650,336.2 Z" fill="#4a4a4a"/><path d="M650,350.2 L656.5,353.7 L650,357.2 Z" fill="#4a4a4a"/><path d="M650,371.2 L656.5,374.7 L650,378.2 Z" fill="#4a4a4a"/><path d="M650,392.2 L656.5,395.7 L650,399.2 Z" fill="#4a4a4a"/><path d="M650,413.2 L656.5,416.7 L650,420.2 Z" fill="#4a4a4a"/></svg>
<div class="a" style="left:661px;top:238.3px;width:300.5px;height:411.7px;background:#fdfdfd;border-right:1.4px solid #c4c4c4;border-bottom:1.4px solid #c4c4c4"></div>
<div class="a" style="left:661px;top:249.4px;width:1.2000000000000455px;height:400.6px;background:#9c9c9c"></div>
<svg width="1000" height="821"><path d="M662,243.5 H960" stroke="#e2e2e2" stroke-width="1.1" stroke-dasharray="5,6"/></svg>
<div class="a" style="left:661.5px;top:296.3px;width:299.5px;height:22.399999999999977px;background:linear-gradient(#b9da9e,#aacf8b);border:1px solid #94c274;box-shadow:inset 0 1px 0 rgba(255,255,255,.25)"></div>
<div class="t" style="left:690.00px;top:254.01px;font-size:14.4px;;color:#262626;transform:scaleX(1.0067);"><u>A</u>ll</div>
<div class="t" style="left:908.71px;top:254.01px;font-size:14.4px;;color:#808080;transform:scaleX(1.0949);-webkit-text-stroke:0.1px currentColor">Ctrl+A</div>
<div class="t" style="left:688.97px;top:276.91px;font-size:14.4px;;color:#262626;transform:scaleX(1.0303);"><u>N</u>one</div>
<div class="t" style="left:867.21px;top:276.91px;font-size:14.4px;;color:#808080;transform:scaleX(1.0935);-webkit-text-stroke:0.1px currentColor">Shift+Ctrl+A</div>
<div class="t" style="left:688.89px;top:300.01px;font-size:14.4px;;color:#ffffff;transform:scaleX(1.1114);"><u>I</u>nvert</div>
<div class="t" style="left:904.81px;top:300.01px;font-size:14.4px;;color:#f4fbef;transform:scaleX(1.1923);-webkit-text-stroke:0.1px currentColor">Shift+I</div>
<div class="t" style="left:688.98px;top:323.21px;font-size:14.4px;;color:#262626;transform:scaleX(1.0161);"><u>F</u>loat</div>
<div class="t" style="left:911.45px;top:323.21px;font-size:14.4px;;color:#808080;transform:scaleX(1.0526);-webkit-text-stroke:0.1px currentColor">Ctrl+L</div>
<div class="t" style="left:689.01px;top:346.81px;font-size:14.4px;;color:#262626;transform:scaleX(0.9907);"><u>B</u>y Color</div>
<div class="t" style="left:900.41px;top:346.81px;font-size:14.4px;;color:#808080;transform:scaleX(1.0851);-webkit-text-stroke:0.1px currentColor">Shift+O</div>
<div class="t" style="left:689.02px;top:370.01px;font-size:14.4px;;color:#262626;transform:scaleX(0.9818);">Fr<u>o</u>m Path</div>
<div class="t" style="left:900.90px;top:370.01px;font-size:14.4px;;color:#808080;transform:scaleX(1.0978);-webkit-text-stroke:0.1px currentColor">Shift+V</div>
<div class="t" style="left:688.95px;top:392.51px;font-size:14.4px;;color:#262626;transform:scaleX(1.0460);"><u>S</u>election Editor</div>
<div class="t" style="left:688.97px;top:424.01px;font-size:14.4px;;color:#262626;transform:scaleX(1.0322);">Fea<u>t</u>her...</div>
<div class="t" style="left:941.50px;top:424.01px;font-size:14.4px;;color:#808080;transform:scaleX(1.1000);-webkit-text-stroke:0.1px currentColor">U</div>
<div class="t" style="left:688.96px;top:444.71px;font-size:14.4px;;color:#262626;transform:scaleX(1.0434);"><u>S</u>harpen</div>
<div class="t" style="left:688.92px;top:466.91px;font-size:14.4px;;color:#262626;transform:scaleX(1.0843);">S<u>h</u>rink...</div>
<div class="t" style="left:941.17px;top:466.91px;font-size:14.4px;;color:#808080;transform:scaleX(1.0300);-webkit-text-stroke:0.1px currentColor">O</div>
<div class="t" style="left:688.94px;top:489.61px;font-size:14.4px;;color:#262626;transform:scaleX(1.0581);"><u>G</u>row...</div>
<div class="t" style="left:949.50px;top:489.61px;font-size:14.4px;;color:#808080;transform:scaleX(1.0000);-webkit-text-stroke:0.1px currentColor">I</div>
<div class="t" style="left:688.94px;top:513.11px;font-size:14.4px;;color:#262626;transform:scaleX(1.0635);">Bo<u>r</u>der...</div>
<div class="t" style="left:688.89px;top:534.71px;font-size:14.4px;;color:#262626;transform:scaleX(1.1118);"><u>D</u>istort...</div>
<div class="t" style="left:688.98px;top:555.41px;font-size:14.4px;;color:#262626;transform:scaleX(1.0234);">Rounded R<u>e</u>ctangle...</div>
<div class="t" style="left:690.00px;top:586.21px;font-size:14.4px;;color:#262626;transform:scaleX(1.0017);">Toggle <u>Q</u>uick Mask</div>
<div class="t" style="left:899.70px;top:586.21px;font-size:14.4px;;color:#808080;transform:scaleX(1.1000);-webkit-text-stroke:0.1px currentColor">Shift+Q</div>
<div class="t" style="left:688.97px;top:607.71px;font-size:14.4px;;color:#262626;transform:scaleX(1.0286);">Save to <u>C</u>hannel</div>
<div class="t" style="left:690.00px;top:630.71px;font-size:14.4px;;color:#262626;transform:scaleX(0.9479);">To <u>P</u>ath</div>
<div class="a" style="left:671px;top:415px;width:279px;height:1.1000000000000227px;background:#e6e6e6"></div>
<div class="a" style="left:671px;top:577px;width:279px;height:1.1000000000000227px;background:#e6e6e6"></div>
<svg width="1000" height="821"><path d="M667.3,251.5 V255.8 M667.3,260.3 V264.6 M672,252.2 H677 M681.4,252.2 H683.7 V254.8 M683.7,259 V263.5 M671,268.8 H675.3 M679.8,268.8 H684" fill="none" stroke="#666" stroke-width="1.15"/><path d="M667.3,275 V279 M667.3,283.5 V287.5 M672,275.2 H676.5 M681,275.2 H683.5 V278 M683.5,282 V286 M671,291.8 H675 M679.8,291.8 H684" fill="none" stroke="#dcdcdc" stroke-width="1"/><path d="M671,279.7 L679.8,288.5 M679.8,279.7 L671,288.5" stroke="#cc0a0a" stroke-width="2.4"/><defs><clipPath id="ctl"><path d="M666.8,298.1 H684.2 L666.8,315.5 Z"/></clipPath><clipPath id="cbr"><path d="M684.2,298.1 V315.5 H666.8 Z"/></clipPath></defs><path d="M666.8,298.1 H684.2 L666.8,315.5 Z" fill="#000"/><path d="M684.2,298.1 V315.5 H666.8 Z" fill="#fff"/><circle cx="675.3" cy="306.3" r="6.5" fill="#fff" clip-path="url(#ctl)"/><circle cx="675.3" cy="306.3" r="6.5" fill="#000" clip-path="url(#cbr)"/><path d="M669.2,332 L683.6,330.2 L680.6,337.4 L667.3,337.4 Z" fill="#f2f2f2" stroke="#9c9c9c" stroke-width="1.05" stroke-linejoin="round"/><path d="M670.2,323.4 L684.2,323.4 L681.4,331 L667.1,331 Z" fill="#fbfbfb" stroke="#9c9c9c" stroke-width="1.05" stroke-linejoin="round"/><path d="M672.2,327.6 C672.8,325.6 674.6,325.1 675.8,326.8 C676.8,328.3 678,329.6 679,327.2" fill="none" stroke="#3a6cc0" stroke-width="1.35" stroke-linecap="round"/><rect x="667.6" y="344.6" width="3" height="6.8" fill="#f4f4f4" stroke="#8a8a8a" stroke-width="1.1"/><rect x="678.1" y="344.3" width="6" height="6.2" fill="#3465a4"/><rect x="678.1" y="350.5" width="6" height="5.6" fill="#cc0000"/><rect x="678.1" y="356.1" width="6" height="6" fill="#4e9a06"/><rect x="679.6" y="345.8" width="3" height="3" fill="none" stroke="#729fcf" stroke-width="0.8"/><rect x="679.6" y="357.6" width="3" height="3" fill="none" stroke="#8ae234" stroke-width="0.8"/><rect x="679.6" y="352" width="3" height="2.6" fill="none" stroke="#ef2929" stroke-width="0.8"/><path d="M671,347.5 L674.5,344 L677,344 L683,351 L681.5,353.5 L676.5,354.5 Z" fill="#f57900"/><path d="M672,347 L675,344.5 L677.5,345 L675,348.5 Z" fill="#fcaf3e"/><defs><linearGradient id="fp" x1="0" y1="0" x2="0" y2="1"><stop offset="0" stop-color="#f58a8a"/><stop offset="1" stop-color="#e82828"/></linearGradient></defs><rect x="668.4" y="368.8" width="14" height="14.5" fill="none" stroke="#333" stroke-width="1.1" stroke-dasharray="1.1,1.3"/><rect x="669" y="369.4" width="12.8" height="13.3" fill="url(#fp)"/><defs><linearGradient id="se" x1="0" y1="0" x2="0" y2="1"><stop offset="0" stop-color="#f6f6f6"/><stop offset="1" stop-color="#d6d6d6"/></linearGradient></defs><rect x="668.2" y="394.4" width="13.6" height="10" rx="2" fill="url(#se)" stroke="#111" stroke-width="1.3" stroke-dasharray="1.3,1.2"/><path d="M672,465.2 H677 M667.6,464.5 V469 M667.6,473.5 V478 M683.6,464.5 V468.5 M683.6,473 V477 M670.5,481.6 H675 M680,481.6 H684.5" stroke="#6a6a6a" stroke-width="1.1"/><path d="M668.70,466.80 L671.30,469.40" stroke="#1f3f8f" stroke-width="1.5"/><path d="M672.30,470.40 L668.70,470.40 L672.30,466.80 Z" fill="#1f3f8f"/><path d="M682.40,466.80 L679.80,469.40" stroke="#1f3f8f" stroke-width="1.5"/><path d="M678.80,470.40 L682.40,470.40 L678.80,466.80 Z" fill="#1f3f8f"/><path d="M668.70,480.40 L671.30,477.80" stroke="#1f3f8f" stroke-width="1.5"/><path d="M672.30,476.80 L668.70,476.80 L672.30,480.40 Z" fill="#1f3f8f"/><path d="M682.40,480.40 L679.80,477.80" stroke="#1f3f8f" stroke-width="1.5"/><path d="M678.80,476.80 L682.40,476.80 L678.80,480.40 Z" fill="#1f3f8f"/><path d="M670,491.6 H673.5 M677.5,491.6 H681 M670.6,495 V498.5 M680.6,495 V498.5 M671,501.6 H674.5 M678,501.6 H681.5" stroke="#6a6a6a" stroke-width="1.1"/><path d="M670.20,491.80 L667.60,489.20" stroke="#1f3f8f" stroke-width="1.5"/><path d="M666.60,488.20 L670.20,488.20 L666.60,491.80 Z" fill="#1f3f8f"/><path d="M680.60,491.80 L683.20,489.20" stroke="#1f3f8f" stroke-width="1.5"/><path d="M684.20,488.20 L680.60,488.20 L684.20,491.80 Z" fill="#1f3f8f"/><path d="M670.20,501.40 L667.60,504.00" stroke="#1f3f8f" stroke-width="1.5"/><path d="M666.60,505.00 L670.20,505.00 L666.60,501.40 Z" fill="#1f3f8f"/><path d="M680.60,501.40 L683.20,504.00" stroke="#1f3f8f" stroke-width="1.5"/><path d="M684.20,505.00 L680.60,505.00 L684.20,501.40 Z" fill="#1f3f8f"/><path d="M669,514.6 H671 M673,514.6 H675 M677,514.6 H679 M669.5,517 V520 M669.5,522 V524.5" stroke="#555" stroke-width="1"/><path d="M681.5,514.6 H683 M672,518.2 H674 M676,518.2 H678 M680.5,518.2 H682 M672.6,521 V523 M672.6,525 V527 M669.5,526.5 V528" stroke="#b0b0b0" stroke-width="1"/><path d="M675.2,606.9 H683.2 V622.2 H675.2" fill="none" stroke="#858585" stroke-width="1.7"/><path d="M669.6,608.5 V620 M669.6,608.6 H674 M669.6,619.8 H674" fill="none" stroke="#333" stroke-width="0.9" stroke-dasharray="0.9,1.3"/><path d="M671.2,612.6 H675.5 V610 L680.2,614.1 L675.5,618.2 V615.6 H671.2 Z" fill="#2f5fb0" stroke="#1f3f8f" stroke-width="0.5"/><defs><linearGradient id="tp" x1="0" y1="0" x2="0" y2="1"><stop offset="0" stop-color="#f48a8a"/><stop offset="1" stop-color="#e41a1a"/></linearGradient></defs><path d="M667.5,630.5 H683.5 M667.5,645 H683.5" stroke="#777" stroke-width="0.9"/><ellipse cx="675.5" cy="638" rx="6.5" ry="6.3" fill="url(#tp)"/><ellipse cx="667.5" cy="630.5" rx="1.2" ry="1.5" fill="#111"/><ellipse cx="675.3" cy="630.5" rx="1.2" ry="1.5" fill="#111"/><ellipse cx="683.3" cy="630.5" rx="1.2" ry="1.5" fill="#111"/><ellipse cx="667.5" cy="645" rx="1.2" ry="1.5" fill="#111"/><ellipse cx="675.3" cy="645" rx="1.2" ry="1.5" fill="#111"/><ellipse cx="683.3" cy="645" rx="1.2" ry="1.5" fill="#111"/></svg>
<div class="a" style="left:779px;top:321.2px;width:136px;height:50.3px;border:1px solid #d6b046;background:linear-gradient(#fdf3cb,#fbebb0 45%,#f8e39e);box-shadow:inset 0 0 0 1px rgba(255,255,255,.45)"></div>
<div class="t" style="left:781.92px;top:325.61px;font-size:14.4px;;color:#2e2e2e;transform:scaleX(1.0756);">Invert the selection</div>
<div class="t" style="left:789.00px;top:354.79px;font-size:12.3px;font-style:italic;color:#333;transform:scaleX(0.9760);-webkit-text-stroke:0.15px currentColor">Press F1 for more help</div>
<svg width="1000" height="821"><path d="M769.8,309.8 L769.8,328.2 L774,323.8 L777.8,329.5 L780,328.3 L776.6,322.8 L782,322.6 Z" fill="#fafafa" stroke="#000" stroke-width="1.5" stroke-linejoin="miter"/></svg>
</body></html>
